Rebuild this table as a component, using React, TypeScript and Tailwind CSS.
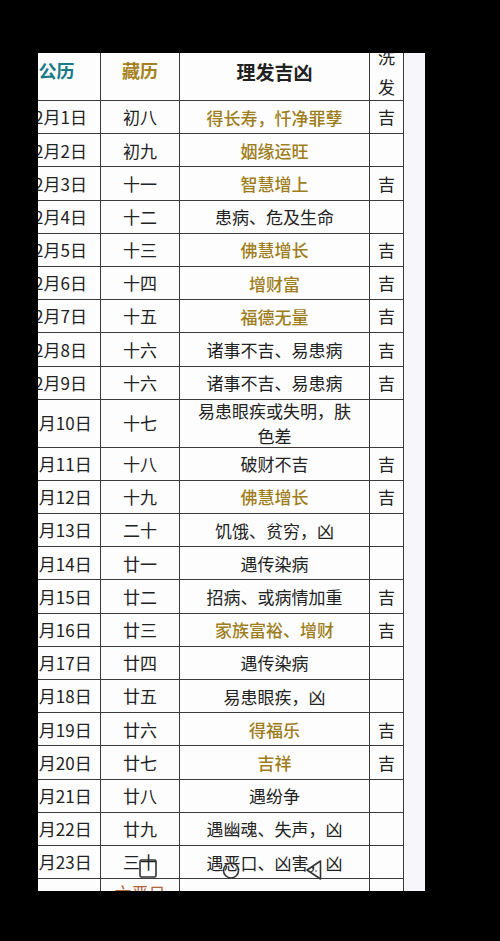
import React from "react";

const GOLD = "text-[#9e7e1c] font-medium";
const DARK = "text-[#222222]";

interface Row {
  day: number;
  lunar: string;
  text: string;
  good?: boolean;
  ji?: boolean;
  tall?: boolean;
}

const rows: Row[] = [
  { day: 1, lunar: "初八", text: "得长寿，忏净罪孽", good: true, ji: true },
  { day: 2, lunar: "初九", text: "姻缘运旺", good: true },
  { day: 3, lunar: "十一", text: "智慧增上", good: true, ji: true },
  { day: 4, lunar: "十二", text: "患病、危及生命" },
  { day: 5, lunar: "十三", text: "佛慧增长", good: true, ji: true },
  { day: 6, lunar: "十四", text: "增财富", good: true, ji: true },
  { day: 7, lunar: "十五", text: "福德无量", good: true, ji: true },
  { day: 8, lunar: "十六", text: "诸事不吉、易患病", ji: true },
  { day: 9, lunar: "十六", text: "诸事不吉、易患病", ji: true },
  { day: 10, lunar: "十七", text: "易患眼疾或失明，肤色差", tall: true },
  { day: 11, lunar: "十八", text: "破财不吉", ji: true },
  { day: 12, lunar: "十九", text: "佛慧增长", good: true, ji: true },
  { day: 13, lunar: "二十", text: "饥饿、贫穷，凶" },
  { day: 14, lunar: "廿一", text: "遇传染病" },
  { day: 15, lunar: "廿二", text: "招病、或病情加重", ji: true },
  { day: 16, lunar: "廿三", text: "家族富裕、增财", good: true, ji: true },
  { day: 17, lunar: "廿四", text: "遇传染病" },
  { day: 18, lunar: "廿五", text: "易患眼疾，凶" },
  { day: 19, lunar: "廿六", text: "得福乐", good: true, ji: true },
  { day: 20, lunar: "廿七", text: "吉祥", good: true, ji: true },
  { day: 21, lunar: "廿八", text: "遇纷争" },
  { day: 22, lunar: "廿九", text: "遇幽魂、失声，凶" },
  { day: 23, lunar: "三十", text: "遇恶口、凶害，凶" },
];

const cell = "flex items-center justify-center border-r-[1.5px] border-[#3a3a3a] shrink-0";

export default function App() {
  return (
    <div
      className="relative w-[500px] h-[941px] bg-black pt-[53px] pl-[38px]"
      style={{ fontFamily: '"Noto Sans CJK SC", "Noto Sans", sans-serif' }}
    >
      <div className="flex w-[387px] h-[838px] overflow-hidden bg-[#fdfdfd]">
        <div className="ml-[-17px] w-[383px] shrink-0 text-[17px]">
          {/* header */}
          <div className="flex h-[48px] border-b-[1.5px] border-[#3a3a3a] text-[18px] font-bold leading-[24px]">
            <div className={`${cell} w-[80px] items-start pt-[5px] pr-[8px] text-[#177b87]`}>公历</div>
            <div className={`${cell} w-[79px] items-start pt-[5px] text-[#a5811c]`}>藏历</div>
            <div className={`${cell} w-[190px] items-start pt-[7px] text-[19px] text-[#222]`}>理发吉凶</div>
            <div className={`${cell} w-[34px] flex-col justify-start font-normal text-[17px] leading-[30px] text-[#222]`}>
              <span className="mt-[-11px]">洗</span>
              <span>发</span>
            </div>
          </div>
          {rows.map((r) => (
            <div
              key={r.day}
              className={`flex border-b-[1.5px] border-[#3a3a3a] ${r.tall ? "h-[48px]" : "h-[33.2px]"}`}
            >
              <div className={`${cell} w-[80px] ${DARK}`}>2月{r.day}日</div>
              <div className={`${cell} w-[79px] ${DARK}`}>{r.lunar}</div>
              <div className={`${cell} w-[190px] px-3 text-center leading-[25px] ${r.good ? GOLD : DARK}`}>
                {r.text}
              </div>
              <div className={`${cell} w-[34px] ${DARK}`}>{r.ji ? "吉" : ""}</div>
            </div>
          ))}
          <div className="flex h-[40px]">
            <div className={`${cell} w-[80px]`} />
            <div className={`${cell} w-[79px] items-start pt-[1px] text-[#b0623a]`}>六恶日</div>
            <div className={`${cell} w-[190px]`} />
            <div className={`${cell} w-[34px]`} />
          </div>
        </div>
        <div className="flex-1 bg-[#f6f6fb]" />
      </div>

      {/* phone navigation overlay */}
      <svg className="absolute left-[139px] top-[859px]" width="19" height="20" viewBox="0 0 19 20" fill="none">
        <rect x="1" y="1" width="16" height="17" rx="1.5" stroke="#333" strokeWidth="1.6" />
      </svg>
      <svg className="absolute left-[221px] top-[861px]" width="20" height="19" viewBox="0 0 20 19" fill="none">
        <circle cx="10" cy="9.5" r="7.5" stroke="#333" strokeWidth="1.6" />
      </svg>
      <svg className="absolute left-[305px] top-[859px]" width="18" height="22" viewBox="0 0 18 22" fill="none">
        <path d="M2 11 L15.5 2 L15.5 20 Z" stroke="#333" strokeWidth="1.6" strokeLinejoin="round" />
        <circle cx="11" cy="12" r="0.8" fill="#333" />
      </svg>
    </div>
  );
}
